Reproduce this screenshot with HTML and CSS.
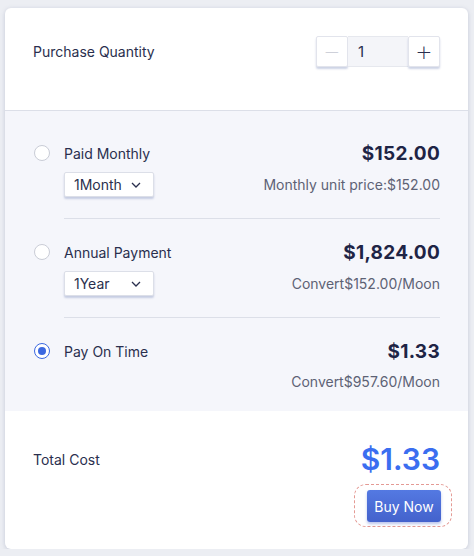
FILE: index.html
```html
<!DOCTYPE html>
<html>
<head>
<meta charset="utf-8">
<link rel="stylesheet" href="styles.css">
</head>
<body>
<div class="card">
  <div class="qty">
    <span class="label">Purchase Quantity</span>
    <div class="stepper">
      <button class="step minus">&minus;</button>
      <div class="value">1</div>
      <button class="step plus">+</button>
    </div>
  </div>
  <div class="plans">
    <div class="option">
      <span class="radio"></span>
      <div class="body">
        <div class="line1"><span class="name">Paid Monthly</span><span class="price">$152.00</span></div>
        <div class="line2">
          <div class="select"><span>1Month</span><svg viewBox="0 0 10 6" width="10" height="6"><path d="M1 1l4 4 4-4" fill="none" stroke="#2a2f4e" stroke-width="1.3"/></svg></div>
          <span class="sub">Monthly unit price:$152.00</span>
        </div>
      </div>
    </div>
    <div class="option">
      <span class="radio"></span>
      <div class="body">
        <div class="line1"><span class="name">Annual Payment</span><span class="price">$1,824.00</span></div>
        <div class="line2">
          <div class="select"><span>1Year</span><svg viewBox="0 0 10 6" width="10" height="6"><path d="M1 1l4 4 4-4" fill="none" stroke="#2a2f4e" stroke-width="1.3"/></svg></div>
          <span class="sub">Convert$152.00/Moon</span>
        </div>
      </div>
    </div>
    <div class="option last">
      <span class="radio checked"></span>
      <div class="body">
        <div class="line1"><span class="name">Pay On Time</span><span class="price">$1.33</span></div>
        <div class="line2 only"><span class="sub">Convert$957.60/Moon</span></div>
      </div>
    </div>
  </div>
  <div class="total">
    <div class="total-row">
      <span class="label">Total Cost</span>
      <span class="amount">$1.33</span>
    </div>
    <div class="actions">
      <span class="focus"><button class="buy">Buy Now</button></span>
    </div>
  </div>
</div>
</body>
</html>
```
FILE: styles.css
```css
* { box-sizing: border-box; }
body {
  margin: 0;
  padding: 8px 6px 0 5px;
  background: #eceef3;
  font-family: Inter, "Open Sans", "Liberation Sans", sans-serif;
  color: #2a2f4e;
}
.card {
  width: 463px;
  background: #fff;
  border-radius: 6px;
  overflow: hidden;
  box-shadow: 0 1px 4px rgba(120, 130, 160, 0.35);
}
.qty {
  height: 103px;
  padding: 28px 28px 0;
  display: flex;
  align-items: flex-start;
  justify-content: space-between;
  border-bottom: 1px solid #dcdfe8;
}
.qty .label { line-height: 31px; }
.label { font-size: 14px; color: #2a2f4e; }
.stepper { display: flex; align-items: stretch; height: 31px; }
.step {
  width: 32px;
  border: 1px solid #e2e4ec;
  background: #fff;
  font-family: "DejaVu Sans", sans-serif;
  font-size: 20px;
  font-weight: 300;
  line-height: 1;
  padding: 0;
  box-shadow: 0 2px 2px rgba(90, 110, 170, 0.3);
  border-radius: 2px;
}
.minus { color: #c5c8d2; }
.plus { color: #2a2f4e; }
.value {
  width: 60px;
  background: #f4f5f9;
  border-top: 1px solid #e6e8ee;
  border-bottom: 1px solid #e6e8ee;
  font-size: 15px;
  padding-left: 10px;
  display: flex;
  align-items: center;
}
.plans {
  background: #f5f6fb;
  padding: 9px 28px 20px 28px;
}
.option { display: flex; }
.radio {
  width: 16px;
  height: 16px;
  border: 1px solid #c9ccd6;
  border-radius: 50%;
  background: #fff;
  margin: 25px 14px 0 1px;
  flex: none;
  display: flex;
  align-items: center;
  justify-content: center;
}
.radio.checked { border: 1.5px solid #3b68e0; }
.radio.checked::after {
  content: "";
  width: 8px;
  height: 8px;
  border-radius: 50%;
  background: #3b68e0;
}
.body {
  flex: 1;
  padding: 23px 0 21px;
  border-bottom: 1px solid #dcdfe8;
}
.option.last .body { border-bottom: 0; padding-bottom: 0; }
.line1 {
  display: flex;
  justify-content: space-between;
  align-items: center;
  height: 20px;
}
.name { font-size: 14px; }
.price { font-size: 19px; font-weight: 700; color: #1e2445; letter-spacing: 0.3px; }
.line2 {
  display: flex;
  justify-content: space-between;
  align-items: center;
  margin-top: 9px;
}
.line2.only { justify-content: flex-end; margin-top: 10px; height: 20px; }
.select {
  width: 90px;
  height: 25px;
  background: #fff;
  border: 1px solid #dcdfe8;
  border-radius: 2px;
  box-shadow: 0 2px 2px rgba(90, 110, 170, 0.3);
  display: flex;
  align-items: center;
  justify-content: space-between;
  padding: 0 12px 0 9px;
  font-size: 14px;
}
.sub { font-size: 14px; color: #5d6275; }
.total {
  padding: 30px 28px 22px;
}
.total-row {
  display: flex;
  justify-content: space-between;
  align-items: center;
  height: 36px;
}
.amount {
  font-size: 30px;
  font-weight: 600;
  color: #3b6ef0;
}
.actions {
  display: flex;
  justify-content: flex-end;
  margin-top: 7px;
  margin-right: -12px;
}
.focus {
  display: inline-flex;
  padding: 5px 10px 4px 12px;
  border: 1px dashed #e49a94;
  border-radius: 12px;
}
.buy {
  width: 74px;
  height: 32px;
  border: 0;
  border-radius: 3px;
  background: linear-gradient(#5479e2, #4462cc);
  color: #fff;
  font-family: inherit;
  font-size: 14px;
  box-shadow: 0 2px 3px rgba(60, 90, 200, 0.35);
}
```
